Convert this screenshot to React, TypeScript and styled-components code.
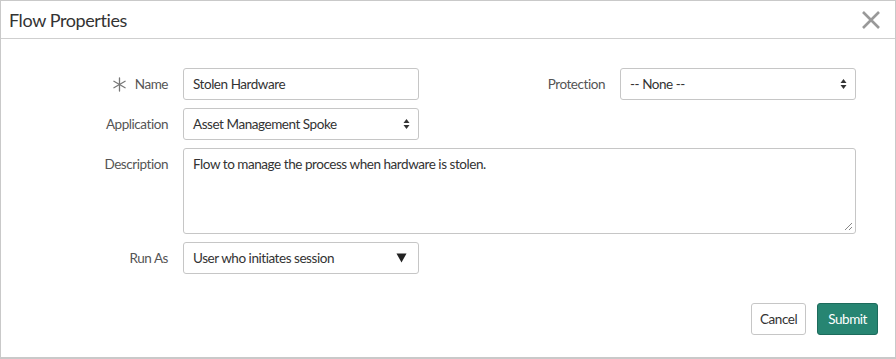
import React from 'react'
import styled, { createGlobalStyle } from 'styled-components'

const GlobalStyle = createGlobalStyle`
  html, body { margin: 0; padding: 0; background: #fff; }
  * { box-sizing: border-box; }
  body { font-family: Lato, "Noto Sans", sans-serif; }
`

const Dialog = styled.div`
  width: 896px;
  height: 359px;
  border: 1px solid #c9c9c9;
  border-bottom-width: 2px;
  display: flex;
  flex-direction: column;
  background: #fff;
`

const Header = styled.div`
  height: 38px;
  border-bottom: 1px solid #cfcfcf;
  display: flex;
  align-items: center;
  justify-content: space-between;
  padding: 0 14px 0 8px;
`

const Title = styled.h1`
  margin: 0;
  font-size: 18px;
  letter-spacing: -0.4px;
  font-weight: 400;
  color: #333;
`

const CloseButton = styled.button`
  border: 0;
  background: none;
  padding: 0;
  width: 20px;
  height: 20px;
  display: flex;
  cursor: pointer;
`

const Body = styled.div`
  flex: 1;
  display: flex;
  flex-direction: column;
  gap: 8px;
  padding: 29px 39px 0 0;
  font-size: 13.5px;
  letter-spacing: -0.45px;
`

const Row = styled.div`
  display: flex;
  align-items: flex-start;
`

const Field = styled.div<{ $grow?: boolean }>`
  display: flex;
  align-items: flex-start;
  gap: 15px;
  ${p => (p.$grow ? 'flex: 1;' : '')}
`

const Label = styled.label<{ $width: number }>`
  width: ${p => p.$width}px;
  flex-shrink: 0;
  display: flex;
  justify-content: flex-end;
  align-items: center;
  gap: 8px;
  height: 32px;
  color: #555;
`

const Spacer = styled.div`
  flex: 1;
`

const Box = styled.div<{ $width?: number }>`
  width: ${p => (p.$width ? `${p.$width}px` : 'auto')};
  height: 32px;
  border: 1px solid #c6c6c6;
  border-radius: 3px;
  display: flex;
  align-items: center;
  justify-content: space-between;
  padding: 0 8px 0 9px;
  color: #333;
  background: #fff;
`

const TextArea = styled.div`
  flex: 1;
  height: 86px;
  border: 1px solid #c6c6c6;
  border-radius: 3px;
  padding: 7px 9px;
  color: #333;
  position: relative;
`

const Grip = styled.svg`
  position: absolute;
  right: 2px;
  bottom: 2px;
`

const Footer = styled.div`
  display: flex;
  justify-content: flex-end;
  gap: 11px;
  padding: 0 17px 22px 0;
`

const Button = styled.button<{ $primary?: boolean }>`
  height: 32px;
  padding: 0 ${p => (p.$primary ? 10 : 8)}px;
  border-radius: 3px;
  font-family: inherit;
  font-size: 13.5px;
  letter-spacing: -0.45px;
  border: 1px solid ${p => (p.$primary ? '#1d6b5c' : '#c6c6c6')};
  background: ${p => (p.$primary ? '#278572' : '#fff')};
  color: ${p => (p.$primary ? '#fff' : '#333')};
`

const Stepper = () => (
  <svg width="7" height="12" viewBox="0 0 7 12">
    <path d="M3.5 1 L6.5 5 L0.5 5 Z M0.5 7 L6.5 7 L3.5 11 Z" fill="#333" />
  </svg>
)

const Asterisk = () => (
  <svg width="15" height="15" viewBox="0 0 15 15">
    <g stroke="#777" strokeWidth="1.3" strokeLinecap="round">
      <line x1="7.5" y1="1" x2="7.5" y2="14" />
      <line x1="1.9" y1="4.3" x2="13.1" y2="10.7" />
      <line x1="1.9" y1="10.7" x2="13.1" y2="4.3" />
    </g>
  </svg>
)

export default function App() {
  return (
    <>
      <GlobalStyle />
      <Dialog>
        <Header>
          <Title>Flow Properties</Title>
          <CloseButton aria-label="Close">
            <svg width="20" height="20" viewBox="0 0 20 20">
              <path d="M2 2 L18 18 M18 2 L2 18" stroke="#999" strokeWidth="2.6" />
            </svg>
          </CloseButton>
        </Header>
        <Body>
          <Row>
            <Field>
              <Label $width={167}>
                <Asterisk />
                Name
              </Label>
              <Box $width={236}>Stolen Hardware</Box>
            </Field>
            <Spacer />
            <Field>
              <Label $width={100}>Protection</Label>
              <Box $width={236}>
                -- None --
                <Stepper />
              </Box>
            </Field>
          </Row>
          <Row>
            <Field>
              <Label $width={167}>Application</Label>
              <Box $width={236}>
                Asset Management Spoke
                <Stepper />
              </Box>
            </Field>
          </Row>
          <Row>
            <Field $grow>
              <Label $width={167}>Description</Label>
              <TextArea>
                Flow to manage the process when hardware is stolen.
                <Grip width="9" height="9" viewBox="0 0 9 9">
                  <path d="M8 1 L1 8 M8 5 L5 8" stroke="#888" strokeWidth="1" />
                </Grip>
              </TextArea>
            </Field>
          </Row>
          <Row>
            <Field>
              <Label $width={167}>Run As</Label>
              <Box $width={236}>
                User who initiates session
                <svg width="11" height="10" viewBox="0 0 11 10" style={{ marginRight: 3 }}>
                  <path d="M0.5 0.5 L10.5 0.5 L5.5 9.5 Z" fill="#222" />
                </svg>
              </Box>
            </Field>
          </Row>
        </Body>
        <Footer>
          <Button>Cancel</Button>
          <Button $primary>Submit</Button>
        </Footer>
      </Dialog>
    </>
  )
}
